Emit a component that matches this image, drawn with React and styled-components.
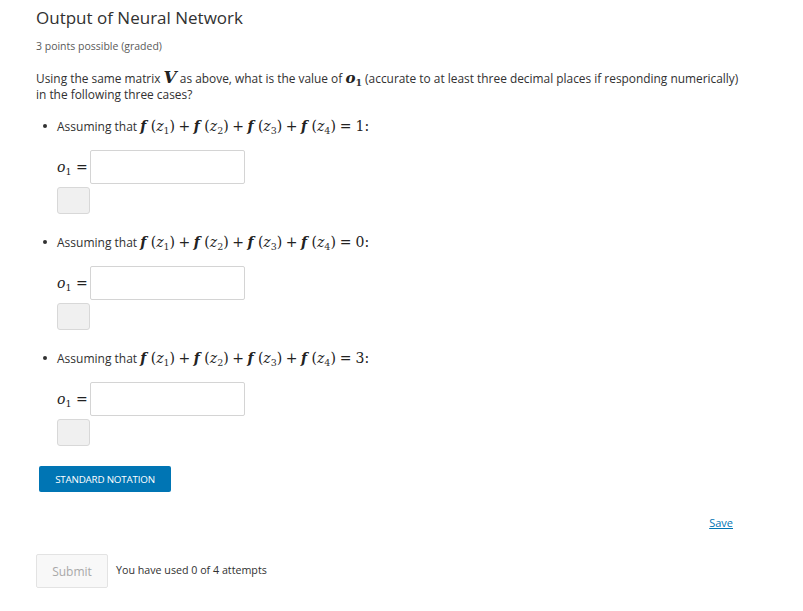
import React from "react"
import styled, { createGlobalStyle } from "styled-components"

const GlobalStyle = createGlobalStyle`
  body {
    margin: 0;
    background: #fff;
    font-family: "Open Sans", "Liberation Sans", sans-serif;
    color: #313131;
  }
`

const Page = styled.div`
  width: 803px;
  padding: 6px 36px 0 36px;
  box-sizing: border-box;
`

const Title = styled.h2`
  margin: 0;
  font-size: 17px;
  font-weight: 400;
  line-height: 24px;
  color: #313131;
`

const Points = styled.div`
  margin-top: 9px;
  font-size: 10.5px;
  line-height: 14px;
  color: #5a5a5a;
`

const Prompt = styled.p`
  margin: 16px 0 0;
  font-size: 11.9px;
  line-height: 16px;
  color: #313131;
`

const M = styled.span`
  font-family: "DejaVu Serif", "Liberation Serif", serif;
  font-style: ${(p) => (p.$up ? "normal" : "italic")};
  font-weight: ${(p) => (p.$bold ? 700 : 400)};
  font-size: ${(p) => p.$size || 14}px;
  color: #222;
`

const Op = styled.span`
  font-family: "DejaVu Serif", "Liberation Serif", serif;
  font-size: 14px;
  color: #222;
  margin: 0 ${(p) => p.$space || 3.5}px;
`

const Sub = styled.sub`
  font-family: "DejaVu Serif", serif;
  font-style: normal;
  font-size: 9.5px;
  vertical-align: -0.3em;
  line-height: 0;
`

const Cases = styled.ul`
  margin: 11px 0 0;
  padding: 0 0 0 21px;
  list-style: none;
`

const Case = styled.li`
  position: relative;
  margin-bottom: 15px;
  font-size: 12px;
  &::before {
    content: "";
    position: absolute;
    left: -14px;
    top: 11px;
    width: 4px;
    height: 4px;
    border-radius: 50%;
    background: #313131;
  }
`

const CaseText = styled.div`
  line-height: 26px;
  height: 26px;
  white-space: nowrap;
`

const AnswerRow = styled.div`
  display: flex;
  align-items: center;
  margin-top: 11px;
  gap: 4px;
`

const Label = styled.span`
  font-family: "DejaVu Serif", serif;
  font-size: 14px;
  color: #222;
  width: 29px;
  white-space: nowrap;
`

const Input = styled.input`
  width: 155px;
  height: 34px;
  box-sizing: border-box;
  border: 1px solid #d4d4d4;
  border-radius: 2px;
  background: #fff;
`

const Status = styled.div`
  margin-top: 3px;
  width: 33px;
  height: 27px;
  box-sizing: border-box;
  border: 1px solid #d8d8d8;
  border-radius: 3px;
  background: #f0f0f0;
`

const NotationButton = styled.button`
  margin: 5px 0 0 3px;
  height: 26px;
  width: 132px;
  border: none;
  border-radius: 2px;
  background: #0075b4;
  color: #fff;
  font-family: "Open Sans", sans-serif;
  font-size: 9.8px;
  letter-spacing: -0.2px;
`

const SaveRow = styled.div`
  display: flex;
  justify-content: flex-end;
  margin-top: 23px;
  padding-right: 34px;
`

const SaveLink = styled.a`
  font-size: 11px;
  color: #0075b4;
  text-decoration: underline;
`

const Actions = styled.div`
  display: flex;
  align-items: center;
  gap: 8px;
  margin-top: 24px;
`

const SubmitButton = styled.button`
  width: 72px;
  height: 34px;
  border: 1px solid #e3e3e3;
  border-radius: 2px;
  background: #f8f8f8;
  color: #a8a8a8;
  font-family: "Open Sans", sans-serif;
  font-size: 12px;
`

const Attempts = styled.span`
  font-size: 10.7px;
  color: #313131;
  margin-top: -3px;
`

const Term = ({ n }) => (
  <>
    <M $bold>f</M>
    <M $up> (</M>
    <M>z</M>
    <Sub>{n}</Sub>
    <M $up>)</M>
  </>
)

const Expr = ({ total }) => (
  <span>
    <Term n={1} />
    <Op>+</Op>
    <Term n={2} />
    <Op>+</Op>
    <Term n={3} />
    <Op>+</Op>
    <Term n={4} />
    <Op $space={4}>=</Op>
    <M $up>{total}:</M>
  </span>
)

const cases = ["1", "0", "3"]

export default function App() {
  return (
    <Page>
      <GlobalStyle />
      <Title>Output of Neural Network</Title>
      <Points>3 points possible (graded)</Points>
      <Prompt>
        Using the same matrix <M $bold $size={17}>V</M> as above, what is the value of{" "}
        <M $bold $size={15}>o</M>
        <Sub style={{ fontWeight: 700 }}>1</Sub> (accurate to at least three decimal places if responding numerically)
        <br />
        in the following three cases?
      </Prompt>
      <Cases>
        {cases.map((t) => (
          <Case key={t}>
            <CaseText>
              Assuming that <Expr total={t} />
            </CaseText>
            <AnswerRow>
              <Label>
                <i>o</i>
                <Sub>1</Sub> =
              </Label>
              <Input type="text" />
            </AnswerRow>
            <Status />
          </Case>
        ))}
      </Cases>
      <NotationButton>STANDARD NOTATION</NotationButton>
      <SaveRow>
        <SaveLink href="#">Save</SaveLink>
      </SaveRow>
      <Actions>
        <SubmitButton>Submit</SubmitButton>
        <Attempts>You have used 0 of 4 attempts</Attempts>
      </Actions>
    </Page>
  )
}
